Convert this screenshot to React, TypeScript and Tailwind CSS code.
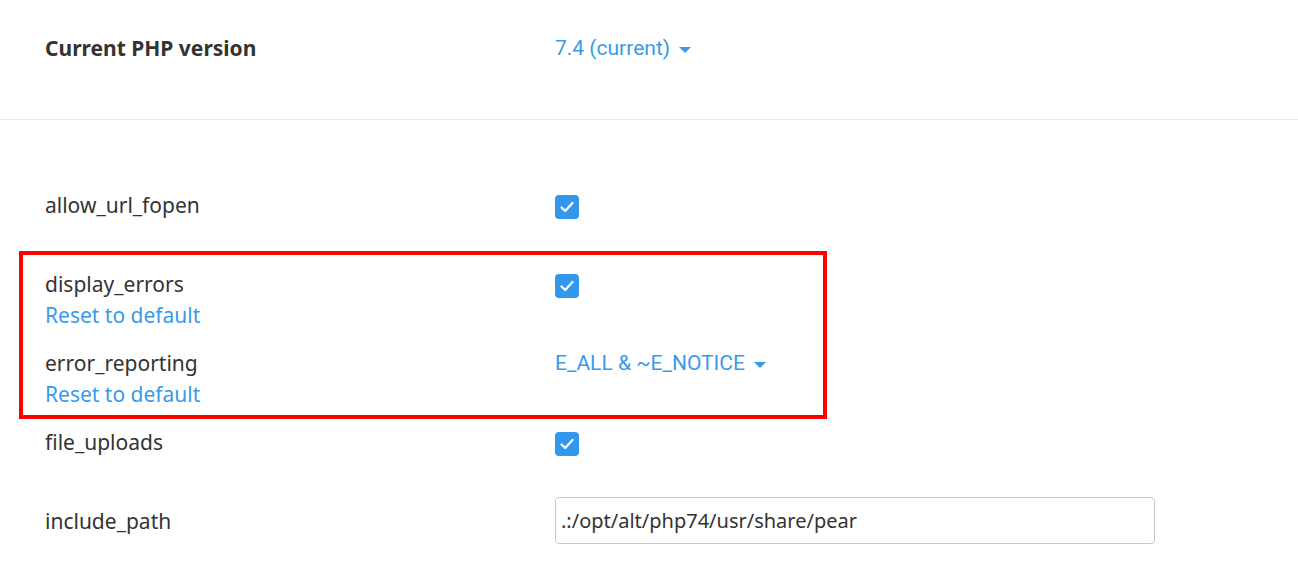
import React from 'react';

const Caret = () => (
  <svg width="12" height="6" viewBox="0 0 12 6" className="ml-[9px] mt-[2px]">
    <path d="M0 0 L12 0 L6 6 Z" fill="#3a99ea" />
  </svg>
);

const Checkbox = () => (
  <div className="w-6 h-6 mt-[5px] rounded-[4px] bg-[#3398ec] flex items-center justify-center">
    <svg width="16" height="16" viewBox="0 0 16 16">
      <path d="M2.5 8.5 L6.2 12 L13.5 4" fill="none" stroke="white" strokeWidth="2.2" strokeLinecap="round" strokeLinejoin="round" />
    </svg>
  </div>
);

const ResetLink = () => (
  <a className="text-[#3a99ea] leading-[31px] mt-[1px] cursor-pointer">Reset to default</a>
);

interface RowProps {
  label: string;
  reset?: boolean;
  height: string;
  children: React.ReactNode;
}

const Row: React.FC<RowProps> = ({ label, reset, height, children }) => (
  <div className={`flex ${height}`}>
    <div className="w-[510px] flex flex-col">
      <span className="leading-[30px]">{label}</span>
      {reset && <ResetLink />}
    </div>
    <div className="flex items-start">{children}</div>
  </div>
);

const Dropdown = ({ value }: { value: string }) => (
  <div className="flex items-center h-[30px] mt-[1px] text-[#3a99ea] font-['Roboto',sans-serif] text-[21px] cursor-pointer">
    <span>{value}</span>
    <Caret />
  </div>
);

export default function App() {
  return (
    <div className="relative w-[1298px] h-[568px] bg-white overflow-hidden text-[21px] text-[#333333] font-['Noto_Sans',sans-serif]">
      <div className="h-[119px] pt-[33px] pl-[45px] flex">
        <div className="w-[510px] font-bold leading-[30px]">Current PHP version</div>
        <Dropdown value="7.4 (current)" />
      </div>
      <div className="h-px bg-[#ebebeb]" />

      <div className="pt-[70px] pl-[45px] flex flex-col">
        <Row label="allow_url_fopen" height="h-[79px]">
          <Checkbox />
        </Row>
        <Row label="display_errors" reset height="h-[79px]">
          <Checkbox />
        </Row>
        <Row label="error_reporting" reset height="h-[79px]">
          <Dropdown value="E_ALL & ~E_NOTICE" />
        </Row>
        <Row label="file_uploads" height="h-[70px]">
          <Checkbox />
        </Row>
        <div className="flex items-center h-[47px]">
          <div className="w-[510px] leading-[30px]">include_path</div>
          <input
            type="text"
            defaultValue=".:/opt/alt/php74/usr/share/pear"
            className="w-[600px] h-[47px] px-[5px] border border-[#c8c8c8] rounded-[4px] text-[20px] text-[#333333] outline-none"
          />
        </div>
      </div>

      <div className="absolute left-[19px] top-[251px] w-[808px] h-[168px] border-[4px] border-[#ff0000] pointer-events-none" />
    </div>
  );
}
